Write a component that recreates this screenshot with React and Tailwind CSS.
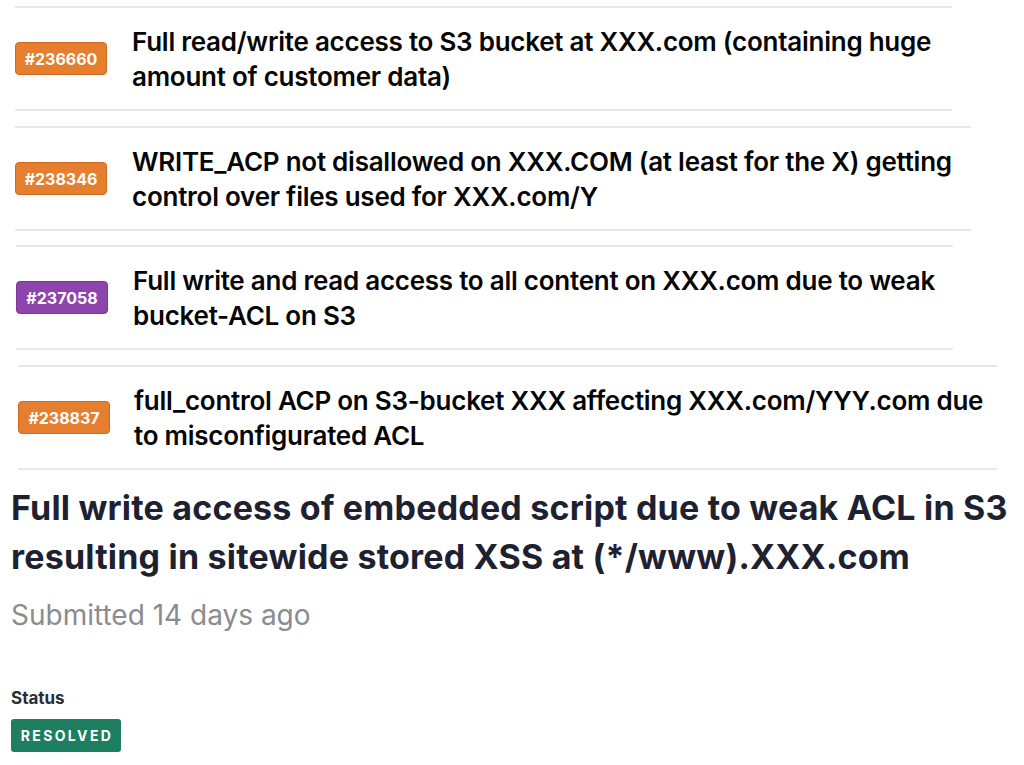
const reports = [
  {
    id: '#236660',
    color: 'bg-[#e67e30] border-[#cf6c22]',
    title: 'Full read/write access to S3 bucket at XXX.com (containing huge amount of customer data)',
    box: 'ml-[15px] w-[937px] mt-[6px]',
    text: 'ml-[25px] w-[812px]',
  },
  {
    id: '#238346',
    color: 'bg-[#e67e30] border-[#cf6c22]',
    title: 'WRITE_ACP not disallowed on XXX.COM (at least for the X) getting control over files used for XXX.com/Y',
    box: 'ml-[15px] w-[956px] mt-[15px]',
    text: 'ml-[25px] w-[836px]',
  },
  {
    id: '#237058',
    color: 'bg-[#8e44ad] border-[#7a3796]',
    title: 'Full write and read access to all content on XXX.com due to weak bucket-ACL on S3',
    box: 'ml-[16px] w-[937px] mt-[14px]',
    text: 'ml-[25px] w-[812px]',
  },
  {
    id: '#238837',
    color: 'bg-[#e67e30] border-[#cf6c22]',
    title: 'full_control ACP on S3-bucket XXX affecting XXX.com/YYY.com due to misconfigurated ACL',
    box: 'ml-[18px] w-[979px] mt-[15px]',
    text: 'ml-[24px] w-[855px]',
  },
];

function ReportRow({ report }) {
  return (
    <div className={`${report.box} h-[105px] border-y-2 border-[#e8e8e8] flex items-center`}>
      <span
        className={`${report.color} border w-[92px] h-[33px] shrink-0 rounded-[4px] flex items-center justify-center text-white text-[16px] font-bold`}
      >
        {report.id}
      </span>
      <p className={`${report.text} text-[26px] leading-[35px] font-semibold tracking-[-0.25px] text-[#050505]`}>
        {report.title}
      </p>
    </div>
  );
}

export default function App() {
  return (
    <div
      className="w-[1024px] h-[765px] bg-white overflow-hidden flex flex-col"
      style={{ fontFamily: 'Inter, "Liberation Sans", sans-serif' }}
    >
      {reports.map((r) => (
        <ReportRow key={r.id} report={r} />
      ))}

      {/* Report details */}
      <div className="pl-[11px] pt-[13px]">
        <h1 className="text-[34px] leading-[49px] font-bold text-[#1e2130] tracking-[0.2px]">
          Full write access of embedded script due to weak ACL in S3 resulting in sitewide stored XSS at (*/www).XXX.com
        </h1>
        <p className="mt-[16px] text-[28px] leading-[36px] text-[#8a8c90]">
          Submitted 14 days ago
        </p>

        <p className="mt-[55px] text-[17px] leading-[20px] font-bold text-[#2a2c36]">Status</p>
        <span className="mt-[11px] w-[110px] h-[33px] rounded-[3px] bg-[#1d7f5f] flex items-center justify-center text-white text-[14px] font-bold tracking-[0.17em] pl-[2px]">
          RESOLVED
        </span>
      </div>
    </div>
  );
}
